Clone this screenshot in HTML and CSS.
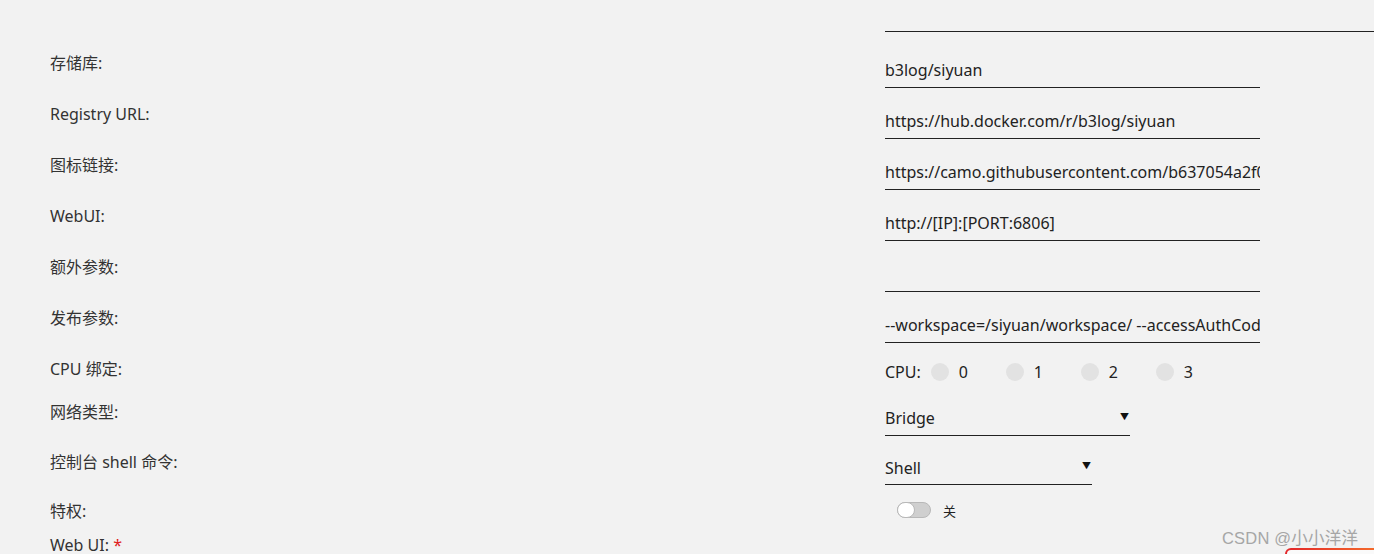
FILE: index.html
```html
<!DOCTYPE html>
<html lang="zh-CN">
<head>
<meta charset="utf-8">
<title>Docker 设置</title>
<link rel="stylesheet" href="styles.css">
</head>
<body>
<div class="form">
  <div class="row row-top">
    <div class="label"></div>
    <div class="field field-wide"></div>
  </div>
  <div class="row row-input">
    <div class="label">存储库:</div>
    <input class="field" type="text" value="b3log/siyuan">
  </div>
  <div class="row row-input">
    <div class="label">Registry URL:</div>
    <input class="field" type="text" value="https://hub.docker.com/r/b3log/siyuan">
  </div>
  <div class="row row-input">
    <div class="label">图标链接:</div>
    <input class="field" type="text" value="https://camo.githubusercontent.com/b637054a2f0c6ed7b0e2d0e0c1a3b5e1f">
  </div>
  <div class="row row-input">
    <div class="label">WebUI:</div>
    <input class="field" type="text" value="http://[IP]:[PORT:6806]">
  </div>
  <div class="row row-input">
    <div class="label">额外参数:</div>
    <input class="field" type="text" value="">
  </div>
  <div class="row row-input">
    <div class="label">发布参数:</div>
    <input class="field" type="text" value="--workspace=/siyuan/workspace/ --accessAuthCode=xxxxxx">
  </div>
  <div class="row row-cpu">
    <div class="label">CPU 绑定:</div>
    <div class="cpu">
      <span class="cpu-title">CPU:</span>
      <span class="opt"><span class="radio"></span><span>0</span></span>
      <span class="opt"><span class="radio"></span><span>1</span></span>
      <span class="opt"><span class="radio"></span><span>2</span></span>
      <span class="opt"><span class="radio"></span><span>3</span></span>
    </div>
  </div>
  <div class="row row-net">
    <div class="label">网络类型:</div>
    <div class="select select-net"><span>Bridge</span><span class="arrow">▼</span></div>
  </div>
  <div class="row row-shell">
    <div class="label">控制台 shell 命令:</div>
    <div class="select select-shell"><span>Shell</span><span class="arrow">▼</span></div>
  </div>
  <div class="row row-priv">
    <div class="label">特权:</div>
    <div class="switch-wrap"><span class="switch"><span class="knob"></span></span><span class="switch-text">关</span></div>
  </div>
  <div class="row row-webui">
    <div class="label">Web UI: <span class="req">*</span></div>
    <div></div>
  </div>
</div>
<div class="watermark">CSDN @小小洋洋</div>
<div class="corner-btn"></div>
</body>
</html>
```

FILE: styles.css
```css
html, body {
  margin: 0;
  padding: 0;
  background: #f2f2f2;
  overflow: hidden;
}
body {
  width: 1374px;
  height: 554px;
  font-family: "Noto Sans", "Noto Sans CJK SC", sans-serif;
  font-size: 16px;
  color: #333;
  position: relative;
}
.form {
  padding-left: 50px;
}
.row {
  display: grid;
  grid-template-columns: 835px 1fr;
  align-items: start;
}
.label {
  line-height: 22px;
  color: #333;
  white-space: nowrap;
}
.field {
  box-sizing: border-box;
  width: 375px;
  height: 36px;
  border: none;
  border-bottom: 1px solid #222;
  background: transparent;
  padding: 0;
  margin: 0;
  font: inherit;
  color: #222;
  outline: none;
  line-height: 33px;
}
.row-top {
  height: 32px;
  margin-bottom: 20px;
}
.field-wide {
  width: 489px;
  height: 32px;
}
.row-input {
  height: 51px;
}
.row-cpu {
  height: 43px;
}
.cpu {
  display: flex;
  align-items: center;
  height: 28px;
  color: #222;
}
.cpu-title {
  margin-right: 10px;
}
.opt {
  display: flex;
  align-items: center;
  width: 75px;
}
.radio {
  width: 18px;
  height: 18px;
  border-radius: 50%;
  background: #e2e2e2;
  margin-right: 10px;
}
.row-net {
  height: 50px;
}
.row-shell {
  height: 49px;
}
.select {
  box-sizing: border-box;
  display: flex;
  justify-content: space-between;
  align-items: center;
  border-bottom: 1px solid #222;
  color: #222;
  padding-right: 1px;
}
.select-net {
  width: 245px;
  height: 35px;
}
.select-shell {
  width: 207px;
  height: 34px;
}
.arrow {
  font-size: 9px;
  margin-top: -4px;
  color: #111;
}
.row-priv {
  height: 34px;
}
.switch-wrap {
  display: flex;
  align-items: center;
  height: 20px;
  padding-left: 12px;
}
.switch {
  box-sizing: border-box;
  position: relative;
  width: 34px;
  height: 16px;
  border: 1px solid #b8b8b8;
  border-radius: 8px;
  background: #cfcfcf;
}
.knob {
  position: absolute;
  left: -1px;
  top: -1px;
  box-sizing: border-box;
  width: 18px;
  height: 16px;
  border-radius: 8px;
  background: #fff;
  border: 1px solid #b8b8b8;
}
.switch-text {
  margin-left: 12px;
  font-size: 13px;
  color: #222;
}
.req {
  color: #e0201c;
}
.watermark {
  position: absolute;
  left: 1222px;
  top: 525px;
  font-family: "Liberation Sans", "Noto Sans CJK SC", sans-serif;
  font-size: 16.5px;
  color: #a6a6a6;
  letter-spacing: 0.2px;
}
.corner-btn {
  position: absolute;
  left: 1285px;
  top: 548px;
  width: 110px;
  height: 30px;
  box-sizing: border-box;
  border-radius: 6px;
  border: 2px solid transparent;
  background: linear-gradient(#fafafa, #fafafa) padding-box, linear-gradient(to right, #e3262a, #f7792b) border-box;
}
```
